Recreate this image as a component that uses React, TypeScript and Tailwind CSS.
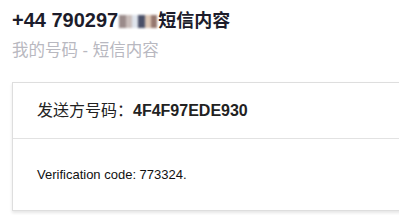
const font = { fontFamily: '"Liberation Sans", "Noto Sans CJK SC", sans-serif' }

function Mosaic() {
  // pixelated part of the phone number
  const blocks = ['#9a8b8a', '#c9bdba', '#dfe4ec', '#4a5068', '#dcc6b4', '#96786f']
  return (
    <span className="inline-flex h-[13px] w-[38px] items-stretch mx-[1px] align-[-1px] blur-[1px]">
      {blocks.map((c, i) => (
        <span key={i} className="flex-1" style={{ backgroundColor: c }} />
      ))}
    </span>
  )
}

export default function App() {
  return (
    <div className="bg-white w-[399px] h-[215px] overflow-hidden" style={font}>
      <div className="pl-[12px] pt-[6px]">
        <h1 className="text-[20px] leading-[28px] font-bold text-[#1c1c2b] whitespace-nowrap">
          +44 790297<Mosaic />
          <span className="text-[18px]">短信内容</span>
        </h1>
        <p className="mt-[4px] text-[16.5px] leading-[22px] text-[#b8b8c0] whitespace-nowrap">
          我的号码 - 短信内容
        </p>
        <div className="mt-[21px] w-[420px] border border-[#dedede] bg-white shadow-[0_2px_3px_rgba(0,0,0,0.1)]">
          <div className="h-[56px] flex items-center pl-[24px] border-b border-[#e2e2e2] text-[16px] text-[#222]">
            发送方号码：<span className="font-bold">4F4F97EDE930</span>
          </div>
          <div className="h-[71px] flex items-center pl-[24px] text-[13px] text-[#111]">
            Verification code: 773324.
          </div>
        </div>
      </div>
    </div>
  )
}
